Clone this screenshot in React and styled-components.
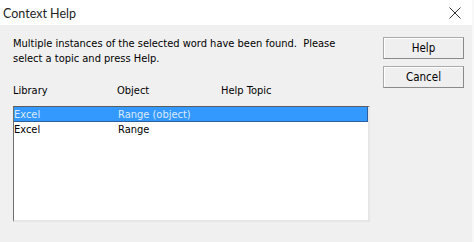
import React from 'react';
import styled, { createGlobalStyle } from 'styled-components';

// page reset
const Global = createGlobalStyle`
  html, body {
    margin: 0;
    padding: 0;
    background: #f0f0f0;
  }
  body {
    width: 474px;
    height: 242px;
    overflow: hidden;
    font-family: 'DejaVu Sans Condensed', 'Liberation Sans', Arial, sans-serif;
  }
`;

// whole dialog window
const Window = styled.div`
  width: 474px;
  height: 242px;
  display: flex;
  flex-direction: column;
  box-sizing: border-box;
  border-right: 2px solid #f8f8f8;
  background: #f0f0f0;
`;

const TitleBar = styled.div`
  height: 25px;
  flex: none;
  background: #ffffff;
  display: flex;
  align-items: center;
  padding-left: 3px;
`;

const Title = styled.span`
  flex: 1;
  font-family: Lato, 'Noto Sans', sans-serif;
  font-size: 12.5px;
  color: #1e1e1e;
  margin-top: 1px;
`;

// windows-style close box, X centred inside
const CloseBox = styled.div`
  width: 34px;
  height: 25px;
  display: flex;
  align-items: center;
  justify-content: center;
`;

const CloseIcon = styled.svg`
  width: 12px;
  height: 12px;
  display: block;
`;

const Body = styled.div`
  flex: 1;
  display: flex;
  padding: 10px 0 0 13px;
`;

const Main = styled.div`
  width: 357px;
  display: flex;
  flex-direction: column;
`;

const Message = styled.p`
  margin: 1px 0 0 0;
  font-size: 11px;
  line-height: 15px;
  color: #000;
`;

// columns shared by header and rows
const Columns = styled.div`
  display: grid;
  grid-template-columns: 104px 104px 1fr;
  font-size: 11px;
  color: ${(p) => (p.$selected ? '#dcebff' : '#000')};
  background: ${(p) => (p.$selected ? '#3399ff' : 'transparent')};
  box-shadow: ${(p) => (p.$selected ? 'inset -1px -1px 0 #2b5f9e' : 'none')};
`;

const Header = styled(Columns)`
  margin-top: 17px;
  height: 15px;
  line-height: 15px;
`;

const ListBox = styled.div`
  margin-top: 8px;
  height: 116px;
  box-sizing: border-box;
  background: #ffffff;
  border-top: 1px solid #5e5e5e;
  border-left: 1px solid #6e6e6e;
  border-right: 2px solid #e6e6e6;
  border-bottom: 2px solid #e6e6e6;
`;

const Row = styled(Columns)`
  height: 15px;
  line-height: 15px;
`;

const Cell = styled.span`
  white-space: nowrap;
`;

const ButtonColumn = styled.div`
  margin-left: 13px;
  padding-top: 2px;
  display: flex;
  flex-direction: column;
  gap: 7px;
`;

const Button = styled.button`
  width: 81px;
  height: 22px;
  box-sizing: border-box;
  padding: 0;
  background: #efefef;
  border: 1px solid #a9a9a9;
  border-right-color: #8a8a8a;
  border-bottom-color: #8a8a8a;
  box-shadow: inset 1px 1px 0 #ffffff;
  font-family: 'DejaVu Sans Condensed', 'Liberation Sans', Arial, sans-serif;
  font-size: 11.5px;
  color: #000;
`;

const rows = [
  { lib: 'Excel', obj: 'Range (object)', topic: '', selected: true },
  { lib: 'Excel', obj: 'Range', topic: '', selected: false },
];

export default function App() {
  return (
    <Window>
      <Global />
      <TitleBar>
        <Title>Context Help</Title>
        <CloseBox>
          <CloseIcon viewBox="0 0 12 12">
            <path d="M0.5 0.5 L11.5 11.5 M11.5 0.5 L0.5 11.5" stroke="#333" strokeWidth="1" fill="none" />
          </CloseIcon>
        </CloseBox>
      </TitleBar>
      <Body>
        <Main>
          <Message>
            {'Multiple instances of the selected word have been found.\u00a0 Please'}
            <br />
            select a topic and press Help.
          </Message>
          <Header>
            <Cell>Library</Cell>
            <Cell>Object</Cell>
            <Cell>Help Topic</Cell>
          </Header>
          <ListBox>
            {rows.map((r, i) => (
              <Row key={i} $selected={r.selected}>
                <Cell>{r.lib}</Cell>
                <Cell>{r.obj}</Cell>
                <Cell>{r.topic}</Cell>
              </Row>
            ))}
          </ListBox>
        </Main>
        <ButtonColumn>
          <Button>Help</Button>
          <Button>Cancel</Button>
        </ButtonColumn>
      </Body>
    </Window>
  );
}
